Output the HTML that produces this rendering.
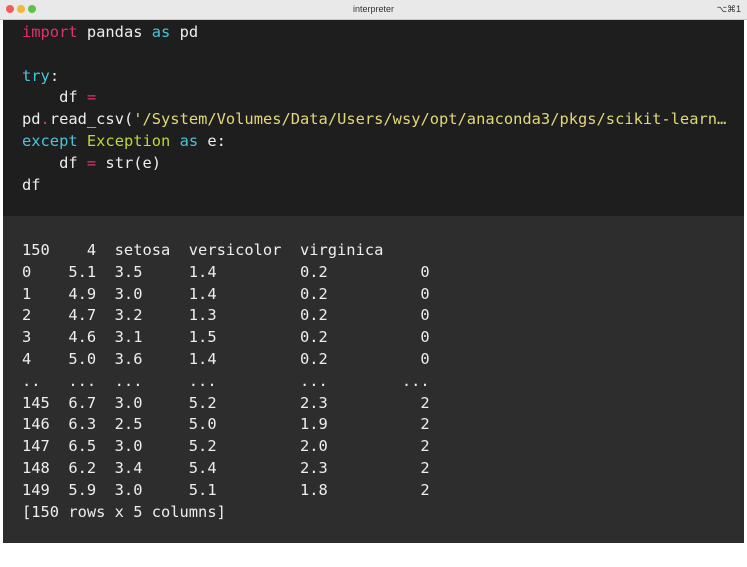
<!DOCTYPE html>
<html><head><meta charset="utf-8"><style>
html,body{margin:0;padding:0;width:747px;height:567px;overflow:hidden;background:#fff;}
.title{position:absolute;left:0;top:0;width:747px;height:19px;background:#e9e9e9;border-bottom:1px solid #c8c8c8;font-family:"Liberation Sans",sans-serif;font-size:9px;color:#333;}
.title .t{position:absolute;left:0;right:0;top:4px;text-align:center;}
.title .k{position:absolute;right:6px;top:4px;}
.dot{position:absolute;top:5px;width:8px;height:8px;border-radius:50%;}
.code{position:absolute;left:3px;top:20px;width:741px;height:196px;background:#1e1e1e;}
.out{position:absolute;left:3px;top:216px;width:741px;height:327px;background:#2d2d2d;}
pre{margin:0;position:absolute;left:19px;font-family:"DejaVu Sans Mono","Liberation Mono",monospace;font-size:15.4px;line-height:21.8px;color:#eeeeee;white-space:pre;}
.kw{color:#e0336b}.bl{color:#49c5d8}.gr{color:#b8d93a}.st{color:#e2d875}
</style></head><body>
<div class="title"><div class="dot" style="left:6px;background:#ec5f57"></div><div class="dot" style="left:17px;background:#f4b738"></div><div class="dot" style="left:28px;background:#5dc346"></div><div class="t">interpreter</div><div class="k">⌥⌘1</div></div>
<div class="code"><pre style="top:2px"><span class="kw">import</span> pandas <span class="bl">as</span> pd

<span class="bl">try</span>:
    df <span class="kw">=</span>
pd<span class="kw">.</span>read_csv(<span class="st">'/System/Volumes/Data/Users/wsy/opt/anaconda3/pkgs/scikit-learn…</span>
<span class="bl">except</span> <span class="gr">Exception</span> <span class="bl">as</span> e:
    df <span class="kw">=</span> str(e)
df</pre></div>
<div class="out"><pre style="top:24px">150    4  setosa  versicolor  virginica
0    5.1  3.5     1.4         0.2          0
1    4.9  3.0     1.4         0.2          0
2    4.7  3.2     1.3         0.2          0
3    4.6  3.1     1.5         0.2          0
4    5.0  3.6     1.4         0.2          0
..   ...  ...     ...         ...        ...
145  6.7  3.0     5.2         2.3          2
146  6.3  2.5     5.0         1.9          2
147  6.5  3.0     5.2         2.0          2
148  6.2  3.4     5.4         2.3          2
149  5.9  3.0     5.1         1.8          2
[150 rows x 5 columns]</pre></div>
</body></html>
